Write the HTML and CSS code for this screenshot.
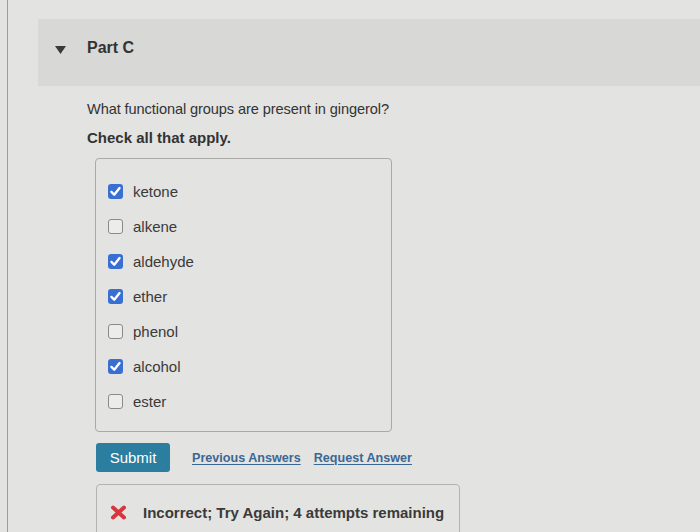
FILE: index.html
```html
<!DOCTYPE html>
<html lang="en">
<head>
<meta charset="utf-8">
<title>Part C</title>
<link rel="stylesheet" href="styles.css">
</head>
<body>
<div class="page">
  <div class="part-header">
    <svg class="caret" width="11" height="8" viewBox="0 0 11 8"><path d="M0 0 H11 L5.5 8 Z" fill="#3a3a3a"/></svg>
    <span class="part-title">Part C</span>
  </div>
  <div class="content">
    <p class="question">What functional groups are present in gingerol?</p>
    <p class="instruction">Check all that apply.</p>
    <div class="choices">
      <label class="choice"><span class="box checked"><svg width="15" height="15" viewBox="0 0 14 14"><path d="M3.2 7.4 L5.8 10 L10.8 3.8" fill="none" stroke="#fff" stroke-width="2.2" stroke-linecap="round" stroke-linejoin="round"/></svg></span><span class="label">ketone</span></label>
      <label class="choice"><span class="box"></span><span class="label">alkene</span></label>
      <label class="choice"><span class="box checked"><svg width="15" height="15" viewBox="0 0 14 14"><path d="M3.2 7.4 L5.8 10 L10.8 3.8" fill="none" stroke="#fff" stroke-width="2.2" stroke-linecap="round" stroke-linejoin="round"/></svg></span><span class="label">aldehyde</span></label>
      <label class="choice"><span class="box checked"><svg width="15" height="15" viewBox="0 0 14 14"><path d="M3.2 7.4 L5.8 10 L10.8 3.8" fill="none" stroke="#fff" stroke-width="2.2" stroke-linecap="round" stroke-linejoin="round"/></svg></span><span class="label">ether</span></label>
      <label class="choice"><span class="box"></span><span class="label">phenol</span></label>
      <label class="choice"><span class="box checked"><svg width="15" height="15" viewBox="0 0 14 14"><path d="M3.2 7.4 L5.8 10 L10.8 3.8" fill="none" stroke="#fff" stroke-width="2.2" stroke-linecap="round" stroke-linejoin="round"/></svg></span><span class="label">alcohol</span></label>
      <label class="choice"><span class="box"></span><span class="label">ester</span></label>
    </div>
    <div class="actions">
      <button class="submit" type="button">Submit</button>
      <a class="link prev" href="#">Previous Answers</a>
      <a class="link" href="#">Request Answer</a>
    </div>
    <div class="feedback">
      <svg class="xmark" width="17" height="15" viewBox="0 0 17 15"><path d="M3 2.5 L14 12.5 M14 2.5 L3 12.5" stroke="#d8363c" stroke-width="4" stroke-linecap="round"/></svg>
      <span class="feedback-text">Incorrect; Try Again; 4 attempts remaining</span>
    </div>
  </div>
</div>
</body>
</html>
```

FILE: styles.css
```css
html, body {
  margin: 0;
  padding: 0;
  background: #e3e3e1;
}
body {
  font-family: "Liberation Sans", Arial, sans-serif;
  color: #333;
  overflow: hidden;
  height: 532px;
}
.page {
  margin-left: 7px;
  border-left: 1px solid #9d9d9b;
  height: 532px;
  padding-top: 19px;
  box-sizing: border-box;
}
.part-header {
  margin-left: 30px;
  height: 67px;
  background: #d8d8d6;
  display: flex;
  align-items: center;
}
.caret {
  margin-left: 17px;
  margin-top: -6px;
}
.part-title {
  margin-left: 21px;
  font-size: 16px;
  font-weight: bold;
  color: #333;
  margin-top: -10px;
}
.content {
  padding-left: 79px;
}
.question {
  margin: 14px 0 0;
  font-size: 14.6px;
  line-height: 18px;
  letter-spacing: -0.1px;
  color: #333;
}
.instruction {
  margin: 11px 0 0;
  font-size: 15px;
  line-height: 18px;
  font-weight: bold;
  color: #333;
}
.choices {
  margin: 11px 0 0 8px;
  width: 297px;
  border: 1px solid #a9a9a7;
  border-radius: 4px;
  padding: 15px 0 12px 12px;
  box-sizing: border-box;
}
.choice {
  display: flex;
  align-items: center;
  height: 35px;
  font-size: 15px;
  color: #3a3a3a;
}
.box {
  width: 15px;
  height: 15px;
  box-sizing: border-box;
  border: 1px solid #8a8a8a;
  border-radius: 3px;
  background: #ececec;
  display: flex;
  align-items: center;
  justify-content: center;
  flex: none;
}
.box.checked {
  border: none;
  background: #3a6fd2;
}
.label {
  margin-left: 10px;
}
.actions {
  margin: 11px 0 0 9px;
  display: flex;
  align-items: center;
}
.submit {
  width: 74px;
  height: 29px;
  border: none;
  border-radius: 3px;
  background: #2b7e9f;
  color: #fff;
  font-family: "Liberation Sans", Arial, sans-serif;
  font-size: 15px;
  padding: 0;
}
.link {
  font-size: 12.6px;
  font-weight: bold;
  color: #3b6794;
  text-decoration: underline;
  text-underline-offset: 2px;
}
.prev {
  margin-left: 22px;
  margin-right: 13px;
}
.feedback {
  margin: 12px 0 0 9px;
  width: 364px;
  height: 70px;
  border: 1px solid #b3b3b1;
  border-radius: 4px;
  box-sizing: border-box;
  display: flex;
  align-items: flex-start;
  padding: 19px 0 0 13px;
}
.xmark {
  margin-top: 1px;
}
.feedback-text {
  margin-left: 16px;
  font-size: 15px;
  font-weight: bold;
  color: #3a3a3a;
  line-height: 18px;
}
```
